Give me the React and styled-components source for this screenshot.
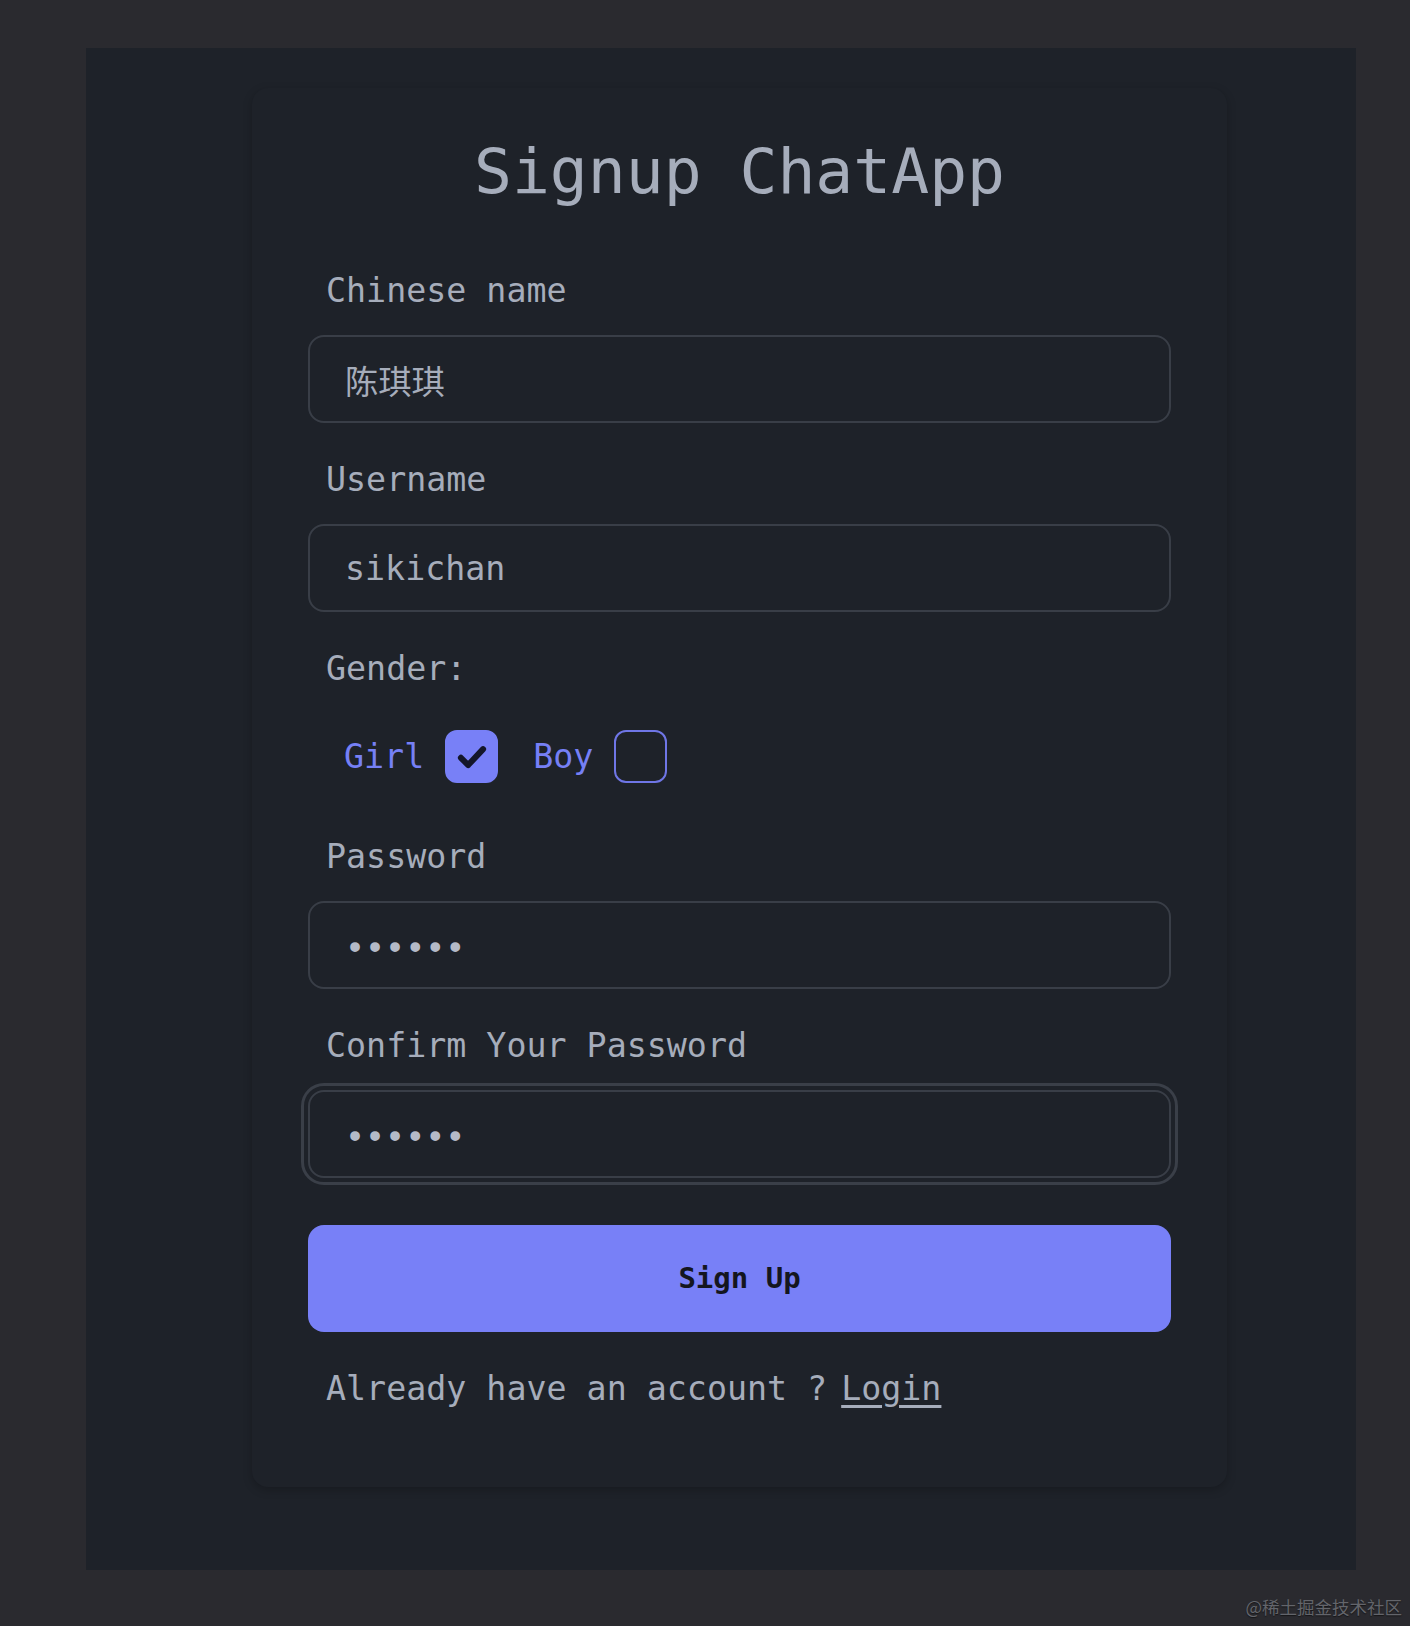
import React from "react";
import styled, { createGlobalStyle } from "styled-components";

const GlobalStyle = createGlobalStyle`
  html, body {
    margin: 0;
    padding: 0;
    background: #2a2a2f;
  }
  * {
    box-sizing: border-box;
  }
`;

const mono = `"DejaVu Sans Mono", "Noto Sans CJK SC", monospace`;

const Page = styled.div`
  min-height: 1626px;
  padding: 48px 54px 0 86px;
  background: #2a2a2f;
  font-family: ${mono};
`;

const Panel = styled.main`
  width: 1270px;
  height: 1522px;
  background: #1e2229;
  padding-top: 40px;
  padding-left: 166px;
`;

const Card = styled.form`
  width: 975px;
  padding: 46px 56px 78px;
  border-radius: 16px;
  background: #1e2229;
  box-shadow: 0 3px 10px rgba(0, 0, 0, 0.22);
`;

const Title = styled.h1`
  margin: 0 0 62px;
  font-size: 63px;
  line-height: 75px;
  font-weight: 400;
  text-align: center;
  color: #a6adbb;
`;

const Field = styled.div`
  margin-bottom: ${(p) => p.$after ?? 37.5}px;
`;

const Label = styled.label`
  display: block;
  padding-left: 18px;
  margin-bottom: ${(p) => p.$below ?? 23.5}px;
  font-size: 33.3px;
  line-height: 40px;
  color: #a6adbb;
`;

const Input = styled.input`
  display: block;
  width: 100%;
  height: 88px;
  padding: 2px 35px 0;
  border: 2px solid #393e47;
  border-radius: 16px;
  background: #1e2229;
  color: #a6adbb;
  font-family: ${mono};
  font-size: 33.3px;
  outline: ${(p) => (p.$ring ? "3px solid #3a3f48" : "none")};
  outline-offset: 4px;
  &[type="password"] {
    padding-top: 8px;
    color: #b4bac7;
  }
`;

const GenderRow = styled.div`
  display: flex;
  align-items: center;
  gap: 35px;
  height: 54px;
  padding-left: 36px;
  margin: 40.5px 0 53.5px;
`;

const Option = styled.label`
  display: flex;
  align-items: center;
  gap: 21px;
  font-size: 33.3px;
  line-height: 40px;
  color: #7680f5;
`;

const Box = styled.span`
  display: flex;
  align-items: center;
  justify-content: center;
  width: 53px;
  height: 53px;
  border-radius: 12px;
  border: 2px solid #6f76e6;
  background: ${(p) => (p.$checked ? "#7880f7" : "transparent")};
  border-color: ${(p) => (p.$checked ? "#7880f7" : "#6f76e6")};
`;

const SubmitButton = styled.button`
  display: block;
  width: 100%;
  height: 107px;
  margin-top: 47px;
  border: none;
  border-radius: 16px;
  background: #7880f7;
  color: #14161f;
  font-family: ${mono};
  font-size: 29px;
  font-weight: 700;
  cursor: pointer;
`;

const Footnote = styled.p`
  margin: 37.5px 0 0;
  padding-left: 18px;
  font-size: 33.3px;
  line-height: 40px;
  color: #a6adbb;
`;

const LoginLink = styled.a`
  margin-left: 14px;
  color: #a6adbb;
  text-decoration: underline;
  text-underline-offset: 5px;
`;

const Watermark = styled.div`
  display: flex;
  justify-content: flex-end;
  margin-top: 25px;
  margin-right: -46px;
  font-family: "Noto Sans CJK SC", sans-serif;
  font-size: 17.5px;
  line-height: 24px;
  color: #63656b;
  text-shadow: 0 1px 1px rgba(0, 0, 0, 0.5);
`;

function Check() {
  return (
    <svg width="38" height="38" viewBox="0 0 24 24" fill="none">
      <path
        d="M5 12.5l4.6 4.6L19 7"
        stroke="#14162a"
        strokeWidth="3.8"
        strokeLinecap="round"
        strokeLinejoin="round"
      />
    </svg>
  );
}

function GenderOption({ name, checked }) {
  return (
    <Option>
      {name}
      <Box $checked={checked}>{checked && <Check />}</Box>
    </Option>
  );
}

export default function App() {
  return (
    <>
      <GlobalStyle />
      <Page>
        <Panel>
          <Card onSubmit={(e) => e.preventDefault()}>
            <Title>Signup ChatApp</Title>

            <Field>
              <Label>Chinese name</Label>
              <Input type="text" defaultValue="陈琪琪" readOnly />
            </Field>

            <Field $after={0}>
              <Label>Username</Label>
              <Input type="text" defaultValue="sikichan" readOnly />
            </Field>

            <Label $below={0} style={{ marginTop: "37.5px" }}>
              Gender:
            </Label>
            <GenderRow>
              <GenderOption name="Girl" checked />
              <GenderOption name="Boy" />
            </GenderRow>

            <Field>
              <Label>Password</Label>
              <Input type="password" defaultValue="123456" readOnly />
            </Field>

            <Field $after={0}>
              <Label>Confirm Your Password</Label>
              <Input type="password" defaultValue="123456" readOnly $ring />
            </Field>

            <SubmitButton type="submit">Sign Up</SubmitButton>

            <Footnote>
              Already have an account ?<LoginLink href="#">Login</LoginLink>
            </Footnote>
          </Card>
        </Panel>
        <Watermark>@稀土掘金技术社区</Watermark>
      </Page>
    </>
  );
}
